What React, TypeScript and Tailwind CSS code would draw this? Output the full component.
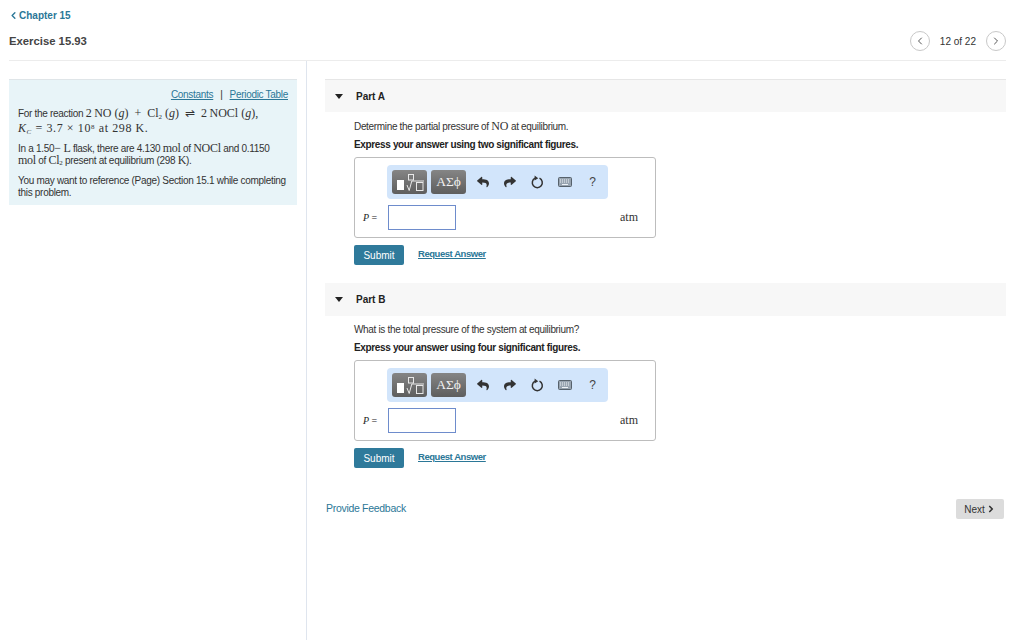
import { ChevronLeft, ChevronRight } from "lucide-react";
import { FaReply, FaShare } from "react-icons/fa";

const serif = "font-['Liberation_Serif',serif]";
const math = `text-[12px] ${serif}`;

function TemplatesIcon() {
  return (
    <svg width="30" height="19" viewBox="0 0 30 19" fill="none">
      <rect x="2" y="7" width="7" height="10" fill="#fff" />
      <rect x="13.5" y="1.5" width="5" height="5.5" stroke="#e8e8e8" />
      <path d="M12 12l2.2 5.5 2.6-9.5H29" stroke="#e8e8e8" />
      <rect x="21.5" y="9.5" width="6.5" height="8" stroke="#e8e8e8" />
    </svg>
  );
}

function RedoCircleIcon() {
  return (
    <svg width="13" height="14" viewBox="0 0 13 14" fill="none">
      <path d="M8.5 3.2a5 5 0 1 1-4.4 0" stroke="#333" strokeWidth="1.5" />
      <path d="M3.6 0.6l3.6 2.6-3.6 2.4z" fill="#333" />
    </svg>
  );
}

function KeyboardIcon() {
  return (
    <svg width="14" height="10" viewBox="0 0 14 10">
      <rect x="0.5" y="0.5" width="13" height="9" rx="1" fill="#98a4b0" stroke="#56616b" />
      <path d="M2 3h10M2 5h10" stroke="#eef2f6" strokeWidth="1" strokeDasharray="1 1" />
      <path d="M4 7.5h6" stroke="#eef2f6" strokeWidth="1" />
    </svg>
  );
}

type AnswerPartProps = {
  name: string;
  question: React.ReactNode;
  hint: string;
  first?: boolean;
};

function AnswerPart({ name, question, hint, first }: AnswerPartProps) {
  return (
    <section className="h-[203px]">
      <div
        className={
          first
            ? "flex h-[33px] items-center border-t border-[#e6e6e6] bg-[#f7f7f7]"
            : "mt-[1px] flex h-[33px] items-center bg-[#f7f7f7]"
        }
      >
        <span className="ml-[10px] h-0 w-0 border-x-[4px] border-t-[5px] border-x-transparent border-t-[#222]" />
        <h3 className="ml-[13px] text-[10px] font-bold text-[#222]">{name}</h3>
      </div>
      <div className="ml-[29px]">
        <p className="mt-[7px] h-[14px] text-[10px] leading-[14px] tracking-[-0.33px] text-[#333]">{question}</p>
        <p className={`${first ? "mt-[5px]" : "mt-[4px]"} h-[14px] text-[10px] leading-[14px] font-bold tracking-[-0.35px] text-[#222]`}>{hint}</p>
        <div className="mt-[5px] h-[81px] w-[302px] rounded-[3px] border border-[#bdbdbd] bg-white">
          <div className="mt-[7px] ml-[32px] flex h-[34px] w-[221px] items-center rounded-[4px] bg-[#d2e5fb] pl-[5px]">
            <div className="flex h-[24px] w-[35px] items-center justify-center rounded-[3px] bg-gradient-to-b from-[#858585] to-[#5e5e5e]">
              <TemplatesIcon />
            </div>
            <div className={`ml-[4px] flex h-[24px] w-[35px] items-center justify-center rounded-[3px] bg-gradient-to-b from-[#858585] to-[#5e5e5e] text-[13.5px] text-[#f2f2f2] ${serif}`}>
              ΑΣϕ
            </div>
            <div className="ml-[3px] flex w-[27px] justify-center text-[12px] text-[#333]"><FaReply /></div>
            <div className="flex w-[27px] justify-center text-[12px] text-[#333]"><FaShare /></div>
            <div className="ml-[1px] flex w-[27px] justify-center"><RedoCircleIcon /></div>
            <div className="flex w-[27px] justify-center"><KeyboardIcon /></div>
            <div className="ml-[1px] flex w-[27px] justify-center text-[12px] text-[#444]">?</div>
          </div>
          <div className="mt-[6px] flex items-center">
            <span className={`ml-[8px] w-[25px] text-[10px] text-[#222] ${serif}`}>
              <i>P</i> =
            </span>
            <div className="h-[25px] w-[68px] border border-[#6e8ccc] bg-white" />
            <span className={`mr-[17px] ml-auto -mt-[2px] text-[12px] text-[#333] ${serif}`}>atm</span>
          </div>
        </div>
        <div className="mt-[7px] flex items-center">
          <button className="h-[20px] w-[50px] rounded-[2px] bg-[#2f7a9b] text-[10px] text-white">Submit</button>
          <a className="-mt-[2px] ml-[14px] text-[9.5px] font-bold tracking-[-0.45px] text-[#2b7797] underline">Request Answer</a>
        </div>
      </div>
    </section>
  );
}

export default function App() {
  return (
    <div className="flex h-[640px] w-[1024px] flex-col overflow-hidden bg-white font-['Liberation_Sans',sans-serif]">
      <header className="mx-[9px] h-[61px] w-[997px] border-b border-[#ececec]">
        <a className="flex h-[31px] items-center text-[10px] font-bold text-[#2b7797]">
          <ChevronLeft size={11} strokeWidth={3} className="-ml-[1px]" />
          <span>Chapter 15</span>
        </a>
        <div className="flex h-[20px] items-center">
          <h1 className="text-[11.3px] font-bold text-[#444]">Exercise 15.93</h1>
          <nav className="ml-auto flex items-center text-[10px] text-[#333]">
            <span className="flex h-[20px] w-[20px] items-center justify-center rounded-full border border-[#c8c8c8]">
              <ChevronLeft size={12} color="#555" />
            </span>
            <span className="mx-[10px]">12 of 22</span>
            <span className="flex h-[20px] w-[20px] items-center justify-center rounded-full border border-[#c8c8c8]">
              <ChevronRight size={12} color="#555" />
            </span>
          </nav>
        </div>
      </header>

      <main className="flex flex-1">
        <aside className="ml-[9px] w-[298px] border-r border-[#dfe5ee] pt-[18px] pr-[9px]">
          <div className="h-[126px] border-t border-[#dfe5e8] bg-[#e8f4f8] px-[9px] text-[10px] leading-[11.5px] tracking-[-0.3px] whitespace-nowrap text-[#333]">
            <div className="flex h-[26px] items-center justify-end pt-[4px] text-[#2b7797]">
              <a className="underline">Constants</a>
              <span className="mx-[7px] text-[#333]">|</span>
              <a className="underline">Periodic Table</a>
            </div>
            <p className="leading-[14px]">
              For the reaction{" "}
              <span className={`${math} tracking-normal`}>
                2{"\u2009"}NO (<i>g</i>) &nbsp;+&nbsp; Cl<sub className="text-[7px]">2</sub> (<i>g</i>) &nbsp;⇌&nbsp; 2{"\u2009"}NOCl (<i>g</i>),
              </span>
              <br />
              <span className={`${math} tracking-[0.6px]`}>
                <i>K</i><sub className="text-[7px]"><i>C</i></sub> = 3.7 × 10<sup className="text-[7px]">8</sup> at 298 K.
              </span>
            </p>
            <p className="mt-[7px]">
              In a 1.50<span className={math}>− L</span> flask, there are 4.130 <span className={math}>mol</span> of <span className={math}>NOCl</span> and 0.1150
              <br />
              <span className={math}>mol</span> of <span className={math}>Cl<sub className="text-[7px]">2</sub></span> present at equilibrium (298 <span className={math}>K</span>).
            </p>
            <p className="mt-[9px]">
              You may want to reference (Page) Section 15.1 while completing
              <br />
              this problem.
            </p>
          </div>
        </aside>

        <div className="ml-[18px] w-[681px] pt-[18px]">
          <AnswerPart
            first
            name="Part A"
            question={<>Determine the partial pressure of <span className={`text-[12px] tracking-normal ${serif}`}>NO</span> at equilibrium.</>}
            hint="Express your answer using two significant figures."
          />
          <AnswerPart
            name="Part B"
            question="What is the total pressure of the system at equilibrium?"
            hint="Express your answer using four significant figures."
          />
          <div className="mt-[13px] flex items-center justify-between pr-[2px]">
            <a className="ml-px text-[10.5px] tracking-[-0.3px] text-[#2b7797]">Provide Feedback</a>
            <button className="flex h-[20px] w-[48px] items-center justify-center rounded-[2px] bg-[#dcdcdc] text-[10px] text-[#333]">
              Next
              <ChevronRight size={10} strokeWidth={4} className="ml-[1px]" />
            </button>
          </div>
        </div>
      </main>
    </div>
  );
}
